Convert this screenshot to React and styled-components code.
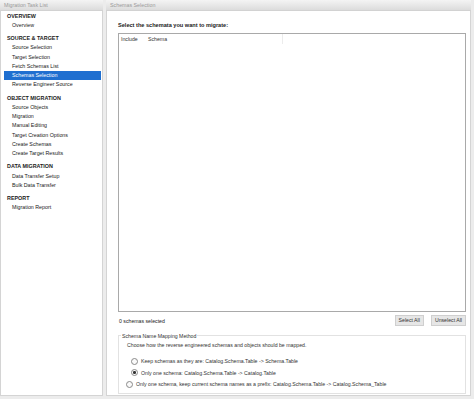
import React from 'react';
import styled, { createGlobalStyle } from 'styled-components';

const GlobalStyle = createGlobalStyle`
  html, body {
    margin: 0;
    padding: 0;
    background: #ececec;
  }
  body {
    font-family: "Liberation Sans", Arial, sans-serif;
    color: #1a1a1a;
  }
`;

const Window = styled.div`
  display: flex;
  height: 399px;
  box-sizing: border-box;
  padding: 0 3px 3px 0;
  gap: 3px;
`;

const Panel = styled.div`
  display: flex;
  flex-direction: column;
  width: ${({ width }) => (width ? `${width}px` : 'auto')};
  flex: ${({ width }) => (width ? 'none' : '1')};
`;

const PanelHeader = styled.div`
  height: 10px;
  line-height: 10px;
  padding-left: ${({ inset }) => inset}px;
  font-size: 5.3px;
  color: #9a9a9a;
  background: linear-gradient(#f4f4f4, #dcdcdc);
  border-bottom: 1px solid #d2d2d2;
  white-space: nowrap;
  overflow: hidden;
`;

const PanelBody = styled.div`
  flex: 1;
  background: #fff;
  border: 1px solid #d4d4d4;
  border-top: none;
  display: flex;
  flex-direction: column;
`;

const TaskList = styled.div`
  padding-top: 0.5px;
`;

const Section = styled.div`
  & + & {
    margin-top: 4px;
  }
`;

const Row = styled.div`
  height: 9.25px;
  line-height: 9.25px;
  font-size: ${({ header }) => (header ? 5.4 : 5.3)}px;
  white-space: nowrap;
  margin: 0 1px 0 3px;
  padding-left: ${({ header }) => (header ? 3 : 8)}px;
  font-weight: ${({ header }) => (header ? 700 : 400)};
  background: ${({ active }) => (active ? '#1f6fd0' : 'transparent')};
  color: ${({ active }) => (active ? '#fff' : '#1a1a1a')};
`;

const Content = styled.div`
  flex: 1;
  display: flex;
  flex-direction: column;
  padding: 10px 4px 1px 11px;
`;

const Title = styled.div`
  font-size: 5.6px;
  font-weight: 700;
  height: 8px;
  line-height: 8px;
  margin-bottom: 4px;
`;

const TableBox = styled.div`
  flex: 1;
  border: 1px solid #a9a9a9;
  background: #fff;
`;

const TableHead = styled.div`
  display: grid;
  grid-template-columns: 27px 137px 1fr;
  height: 10px;
  line-height: 10px;
  font-size: 5.2px;
  color: #333;
`;

const HeadCell = styled.div`
  padding-left: 2px;
  border-right: ${({ divider }) => (divider ? '1px solid #ececec' : 'none')};
`;

const Footer = styled.div`
  display: flex;
  align-items: center;
  height: 10px;
  margin-top: 4px;
  font-size: 5.2px;
`;

const Count = styled.div`
  flex: 1;
  padding-left: 1px;
`;

const Button = styled.div`
  height: 9px;
  line-height: 9px;
  padding: 0 3px;
  margin-left: ${({ gap }) => gap}px;
  background: #e6e6e6;
  border: 1px solid #cfcfcf;
  font-size: 5.2px;
  color: #333;
`;

const Group = styled.fieldset`
  margin: 7px 0 0 0;
  padding: 2px 0 3px 0;
  border: 1px solid #e2e2e2;
  min-inline-size: 0;
`;

const Legend = styled.legend`
  font-size: 5.2px;
  padding: 0 1px;
  margin-left: 2px;
  color: #333;
`;

const Hint = styled.div`
  font-size: 5.2px;
  margin: 1px 0 8px 8px;
  color: #333;
`;

const Option = styled.label`
  display: flex;
  align-items: center;
  height: 11.5px;
  font-size: 5.2px;
  color: #333;
  padding-left: ${({ indent }) => indent}px;
`;

const Radio = styled.span`
  width: 5px;
  height: 5px;
  border-radius: 50%;
  border: 0.8px solid #8a8a8a;
  background: #fafafa;
  margin-right: 3px;
  display: flex;
  align-items: center;
  justify-content: center;

  &::after {
    content: '';
    width: 2.6px;
    height: 2.6px;
    border-radius: 50%;
    background: ${({ checked }) => (checked ? '#333' : 'transparent')};
  }
`;

const sections = [
  { title: 'OVERVIEW', items: ['Overview'] },
  {
    title: 'SOURCE & TARGET',
    items: ['Source Selection', 'Target Selection', 'Fetch Schemas List', 'Schemas Selection', 'Reverse Engineer Source'],
  },
  {
    title: 'OBJECT MIGRATION',
    items: ['Source Objects', 'Migration', 'Manual Editing', 'Target Creation Options', 'Create Schemas', 'Create Target Results'],
  },
  { title: 'DATA MIGRATION', items: ['Data Transfer Setup', 'Bulk Data Transfer'] },
  { title: 'REPORT', items: ['Migration Report'] },
];

const options = [
  { label: 'Keep schemas as they are: Catalog.Schema.Table -> Schema.Table', indent: 12 },
  { label: 'Only one schema: Catalog.Schema.Table -> Catalog.Table', indent: 12, checked: true },
  {
    label: 'Only one schema, keep current schema names as a prefix: Catalog.Schema.Table -> Catalog.Schema_Table',
    indent: 7,
  },
];

export default function App() {
  return (
    <>
      <GlobalStyle />
      <Window>
        <Panel width={103}>
          <PanelHeader inset={4}>Migration Task List</PanelHeader>
          <PanelBody>
            <TaskList>
              {sections.map((s) => (
                <Section key={s.title}>
                  <Row header>{s.title}</Row>
                  {s.items.map((item) => (
                    <Row key={item} active={item === 'Schemas Selection'}>
                      {item}
                    </Row>
                  ))}
                </Section>
              ))}
            </TaskList>
          </PanelBody>
        </Panel>
        <Panel>
          <PanelHeader inset={4}>Schemas Selection</PanelHeader>
          <PanelBody>
            <Content>
              <Title>Select the schemata you want to migrate:</Title>
              <TableBox>
                <TableHead>
                  <HeadCell>Include</HeadCell>
                  <HeadCell divider>Schema</HeadCell>
                  <HeadCell />
                </TableHead>
              </TableBox>
              <Footer>
                <Count>0 schemas selected</Count>
                <Button gap={0}>Select All</Button>
                <Button gap={7}>Unselect All</Button>
              </Footer>
              <Group>
                <Legend>Schema Name Mapping Method</Legend>
                <Hint>Choose how the reverse engineered schemas and objects should be mapped.</Hint>
                {options.map((o) => (
                  <Option key={o.label} indent={o.indent}>
                    <Radio checked={o.checked} />
                    {o.label}
                  </Option>
                ))}
              </Group>
            </Content>
          </PanelBody>
        </Panel>
      </Window>
    </>
  );
}
